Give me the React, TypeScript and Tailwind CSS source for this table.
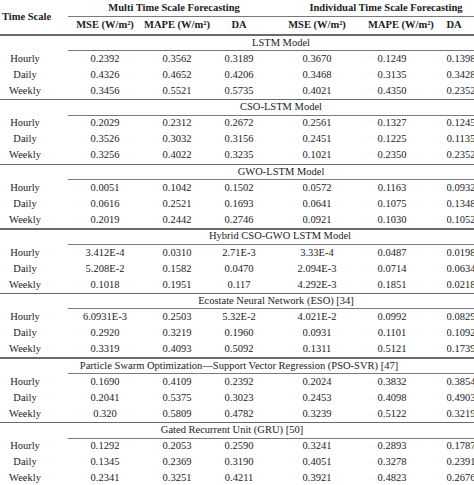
import React from 'react';

type Block = {
  title: string;
  // width of a box starting at x=0 whose centre is the title's centre
  box: string;
  rows: string[][];
};

const blocks: Block[] = [
  {
    title: 'LSTM Model',
    box: 'w-[562px]',
    rows: [
      ['0.2392', '0.3562', '0.3189', '0.3670', '0.1249', '0.1398'],
      ['0.4326', '0.4652', '0.4206', '0.3468', '0.3135', '0.3428'],
      ['0.3456', '0.5521', '0.5735', '0.4021', '0.4350', '0.2352'],
    ],
  },
  {
    title: 'CSO-LSTM Model',
    box: 'w-[562px]',
    rows: [
      ['0.2029', '0.2312', '0.2672', '0.2561', '0.1327', '0.1245'],
      ['0.3526', '0.3032', '0.3156', '0.2451', '0.1225', '0.1135'],
      ['0.3256', '0.4022', '0.3235', '0.1021', '0.2350', '0.2352'],
    ],
  },
  {
    title: 'GWO-LSTM Model',
    box: 'w-[562px]',
    rows: [
      ['0.0051', '0.1042', '0.1502', '0.0572', '0.1163', '0.0932'],
      ['0.0616', '0.2521', '0.1693', '0.0641', '0.1075', '0.1348'],
      ['0.2019', '0.2442', '0.2746', '0.0921', '0.1030', '0.1052'],
    ],
  },
  {
    title: 'Hybrid CSO-GWO LSTM Model',
    box: 'w-[560px]',
    rows: [
      ['3.412E-4', '0.0310', '2.71E-3', '3.33E-4', '0.0487', '0.0198'],
      ['5.208E-2', '0.1582', '0.0470', '2.094E-3', '0.0714', '0.0634'],
      ['0.1018', '0.1951', '0.117', '4.292E-3', '0.1851', '0.0218'],
    ],
  },
  {
    title: 'Ecostate Neural Network (ESO) [34]',
    box: 'w-[552px]',
    rows: [
      ['6.0931E-3', '0.2503', '5.32E-2', '4.021E-2', '0.0992', '0.0829'],
      ['0.2920', '0.3219', '0.1960', '0.0931', '0.1101', '0.1092'],
      ['0.3319', '0.4093', '0.5092', '0.1311', '0.5121', '0.1739'],
    ],
  },
  {
    title: 'Particle Swarm Optimization\u2014Support Vector Regression (PSO-SVR) [47]',
    box: 'w-[478px]',
    rows: [
      ['0.1690', '0.4109', '0.2392', '0.2024', '0.3832', '0.3854'],
      ['0.2041', '0.5375', '0.3023', '0.2453', '0.4098', '0.4903'],
      ['0.320', '0.5809', '0.4782', '0.3239', '0.5122', '0.3219'],
    ],
  },
  {
    title: 'Gated Recurrent Unit (GRU) [50]',
    box: 'w-[464px]',
    rows: [
      ['0.1292', '0.2053', '0.2590', '0.3241', '0.2893', '0.1787'],
      ['0.1345', '0.2369', '0.3190', '0.4051', '0.3278', '0.2391'],
      ['0.2341', '0.3251', '0.4211', '0.3921', '0.4823', '0.2676'],
    ],
  },
];

const labels = ['Hourly', 'Daily', 'Weekly'];

// column widths chosen so each column's centre sits where the reference has it
const colWidths = ['w-[74px]', 'w-[70px]', 'w-[54px]', 'w-[102px]', 'w-[48px]', 'w-[90px]'];

const FullRule = () => <div className="h-[1.5px] w-full shrink-0 bg-[#6b6b6b]" />;
const PartRule = () => (
  <div className="flex shrink-0">
    <div className="w-[68px] shrink-0" />
    <div className="h-px flex-1 bg-[#7a7a7a]" />
  </div>
);

const DataRow = ({ label, values }: { label: string; values: string[] }) => (
  <div className="flex h-[16px] shrink-0 items-center">
    <div className="w-[68px] shrink-0">
      <div className="w-[50px] text-center">{label}</div>
    </div>
    {values.map((v, i) => (
      <div key={i} className={`${colWidths[i]} shrink-0 whitespace-nowrap text-center`}>
        {v}
      </div>
    ))}
  </div>
);

export default function App() {
  return (
    <div
      className="w-[474px] h-[485px] overflow-hidden bg-white text-[10.5px] leading-none text-[#222]"
      style={{ fontFamily: '"Liberation Serif", "DejaVu Serif", serif' }}
    >
      <div className="flex w-[520px] flex-col">
        {/* Header */}
        <div className="flex">
          <div className="flex w-[68px] shrink-0 items-center">
            <div className="pl-[2px] font-bold whitespace-nowrap">Time Scale</div>
          </div>
          <div className="flex flex-1 flex-col">
            <div className="flex h-[16px] items-center font-bold">
              <div className="w-[212px] shrink-0 whitespace-nowrap text-center">
                Multi Time Scale Forecasting
              </div>
              <div className="w-[212px] shrink-0 whitespace-nowrap text-center">
                Individual Time Scale Forecasting
              </div>
            </div>
            <div className="h-px bg-[#7a7a7a]" />
            <div className="flex h-[17.4px] items-center font-bold">
              <div className={`${colWidths[0]} shrink-0 whitespace-nowrap text-center`}>MSE (W/m²)</div>
              <div className={`${colWidths[1]} shrink-0 whitespace-nowrap text-center`}>MAPE (W/m²)</div>
              <div className={`${colWidths[2]} shrink-0 whitespace-nowrap text-center`}>DA</div>
              <div className={`${colWidths[3]} shrink-0 whitespace-nowrap text-center`}>MSE (W/m²)</div>
              <div className={`${colWidths[4]} shrink-0 whitespace-nowrap text-center`}>MAPE (W/m²)</div>
              <div className={`${colWidths[5]} shrink-0 whitespace-nowrap pr-[14px] text-center`}>DA</div>
            </div>
          </div>
        </div>

        {/* Model blocks */}
        {blocks.map((b) => (
          <div key={b.title} className="flex flex-col">
            <FullRule />
            <div className="flex h-[14.1px] shrink-0 items-center">
              <div className={`${b.box} shrink-0 whitespace-nowrap text-center`}>{b.title}</div>
            </div>
            <PartRule />
            {b.rows.map((r, i) => (
              <DataRow key={i} label={labels[i]} values={r} />
            ))}
          </div>
        ))}
      </div>
    </div>
  );
}
